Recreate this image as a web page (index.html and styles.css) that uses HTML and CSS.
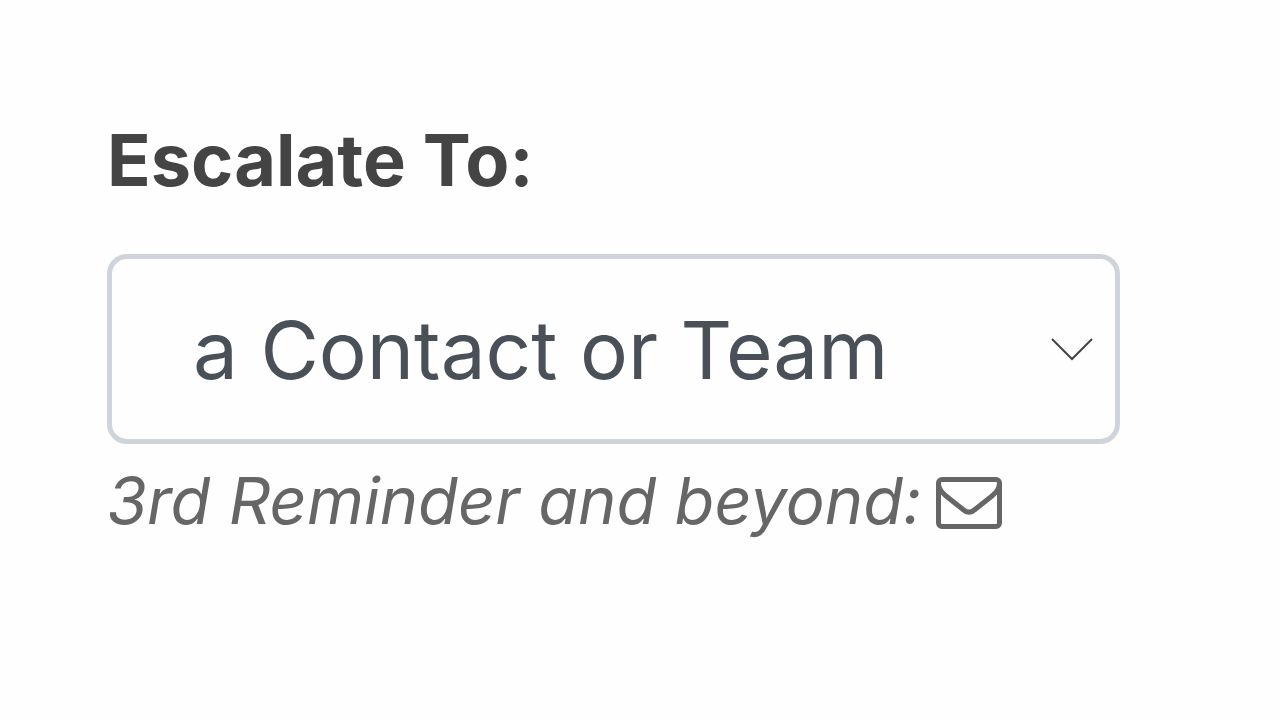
FILE: index.html
```
<!DOCTYPE html>
<html lang="en">
<head>
  <meta charset="UTF-8">
  <title>Escalation</title>
  <link rel="stylesheet" href="styles.css">
</head>
<body>

  <div class="escalate">
    <label class="escalate-label" for="escalateTo">Escalate To:</label>

    <div class="select-wrap">
      <select id="escalateTo" class="escalate-select">
        <option selected>a Contact or Team</option>
      </select>
      <svg class="chevron" viewBox="0 0 42 24" aria-hidden="true">
        <path d="M1 2 L21 22 L41 2" />
      </svg>
    </div>

    <div class="hint">
      <span>3rd Reminder and beyond:</span>
      <svg class="envelope" viewBox="0 0 66 52" aria-hidden="true">
        <rect x="2.5" y="2.5" width="61" height="47" rx="3.5" />
        <path d="M2.5 6 C2.5 11 5 15 10 19 L27 32.5 C31 36 35 36 39 32.5 L56 19 C61 15 63.5 11 63.5 6" />
      </svg>
    </div>
  </div>

</body>
</html>
```

FILE: styles.css
```
* {
  box-sizing: border-box;
}

body {
  margin: 0;
  padding: 112px 160px 112px 107px;
  font-family: 'Inter', sans-serif;
  background: #fefefe;
}

.escalate-label {
  display: block;
  margin-bottom: 46px;
  font-size: 72px;
  font-weight: 700;
  line-height: 96px;
  color: #444444;
}

.select-wrap {
  position: relative;
}

.escalate-select {
  display: block;
  width: 100%;
  height: 190px;
  padding: 0 81px;
  border: 5px solid #ced4da;
  border-radius: 20px;
  background: #fefefe;
  font-family: inherit;
  font-size: 80px;
  color: #495057;
  appearance: none;
}

.chevron {
  position: absolute;
  top: 50%;
  right: 27px;
  width: 42px;
  height: 24px;
  margin-top: -12px;
  fill: none;
  stroke: #444444;
  stroke-width: 2;
  pointer-events: none;
}

.hint {
  display: flex;
  align-items: center;
  gap: 14px;
  margin-top: 16px;
  font-size: 65px;
  font-style: italic;
  line-height: 82px;
  color: #666666;
}

.envelope {
  width: 66px;
  height: 52px;
  margin-top: 4px;
  fill: none;
  stroke: #666666;
  stroke-width: 5;
}
```
